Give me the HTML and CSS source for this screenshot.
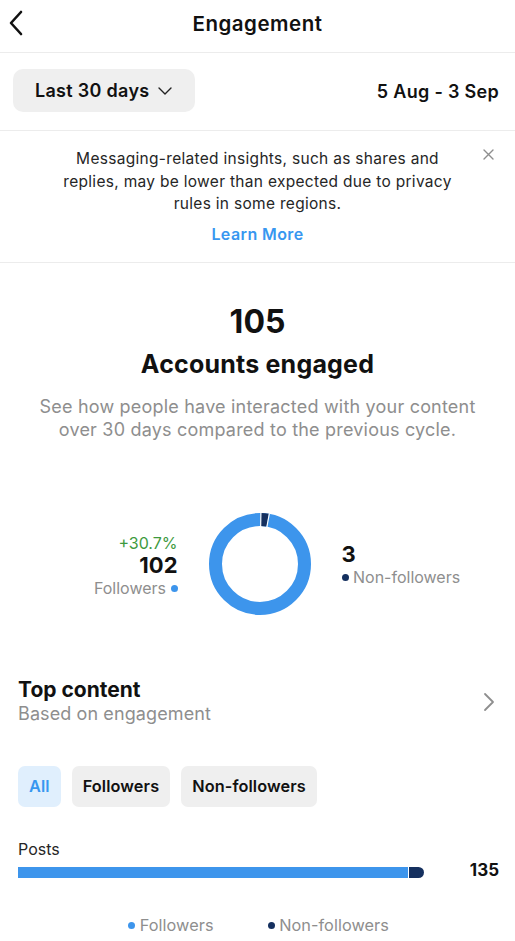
FILE: index.html
```html
<!DOCTYPE html>
<html lang="en">
<head>
    <meta charset="UTF-8">
    <meta name="viewport" content="width=device-width, initial-scale=1.0">
    <title>Engagement</title>
<link rel="stylesheet" href="styles.css">
</head>
<body>
    <header class="top-bar">
        <svg class="back" width="16" height="26" viewBox="0 0 16 26">
            <path d="M13 2 L3 13 L13 24" fill="none" stroke="#111" stroke-width="2.6" stroke-linecap="round" stroke-linejoin="round"/>
        </svg>
        <h1>Engagement</h1>
    </header>

    <div class="range-row">
        <button class="range-button">
            Last 30 days
            <svg width="14" height="8" viewBox="0 0 14 8">
                <path d="M1 1 L7 7 L13 1" fill="none" stroke="#222" stroke-width="1.4" stroke-linecap="round" stroke-linejoin="round"/>
            </svg>
        </button>
        <span class="range-dates">5 Aug - 3 Sep</span>
    </div>

    <section class="notice">
        <svg class="close" width="11" height="11" viewBox="0 0 11 11">
            <path d="M1 1 L10 10 M10 1 L1 10" stroke="#8e8e8e" stroke-width="1.4" stroke-linecap="round"/>
        </svg>
        <p>Messaging-related insights, such as shares and replies, may be lower than expected due to privacy rules in some regions.</p>
        <a href="#" class="learn-more">Learn More</a>
    </section>

    <section class="summary">
        <div class="total">105</div>
        <h2>Accounts engaged</h2>
        <p class="summary-text">See how people have interacted with your content over 30 days compared to the previous cycle.</p>
    </section>

    <section class="split">
        <div class="split-side left">
            <span class="change">+30.7%</span>
            <span class="count">102</span>
            <span class="label">Followers <i class="dot light"></i></span>
        </div>
        <svg class="donut" width="102" height="102" viewBox="0 0 102 102">
            <circle cx="51" cy="51" r="44.5" fill="none" stroke="#3d95ec" stroke-width="13"/>
            <circle cx="51" cy="51" r="44.5" fill="none" stroke="#15305f" stroke-width="13"
                    stroke-dasharray="7 300" transform="rotate(-89 51 51)"/>
            <line x1="51" y1="0" x2="51" y2="16" stroke="#fff" stroke-width="1.2" transform="rotate(1 51 51)"/>
            <line x1="51" y1="0" x2="51" y2="16" stroke="#fff" stroke-width="1.2" transform="rotate(10.5 51 51)"/>
        </svg>
        <div class="split-side right">
            <span class="count">3</span>
            <span class="label"><i class="dot dark"></i> Non-followers</span>
        </div>
    </section>

    <section class="top-content">
        <div>
            <h3>Top content</h3>
            <span class="sub">Based on engagement</span>
        </div>
        <svg width="12" height="20" viewBox="0 0 12 20">
            <path d="M2 2 L10 10 L2 18" fill="none" stroke="#8e8e8e" stroke-width="1.8" stroke-linecap="round" stroke-linejoin="round"/>
        </svg>
    </section>

    <div class="chips">
        <span class="chip active">All</span>
        <span class="chip">Followers</span>
        <span class="chip">Non-followers</span>
    </div>

    <section class="posts">
        <div class="posts-label">Posts</div>
        <div class="posts-row">
            <div class="bar">
                <div class="bar-followers" style="width: 390px"></div>
                <div class="bar-non"></div>
            </div>
            <span class="posts-total">135</span>
        </div>
    </section>

    <div class="legend">
        <span><i class="dot light"></i> Followers</span>
        <span><i class="dot dark"></i> Non-followers</span>
    </div>
</body>
</html>
```

FILE: styles.css
```css
body {
    margin: 0;
    font-family: Inter, "Noto Sans", sans-serif;
    color: #111;
    background: #fff;
    width: 515px;
}

.top-bar {
    height: 52px;
    border-bottom: 1px solid #ececec;
    display: flex;
    align-items: center;
    justify-content: center;
    position: relative;
}

.top-bar h1 {
    margin: 0 0 6px;
    font-size: 20.5px;
    font-weight: 600;
    letter-spacing: 0.5px;
}

.back {
    position: absolute;
    left: 8px;
    top: 10px;
}

.range-row {
    display: flex;
    align-items: center;
    justify-content: space-between;
    padding: 16px 16px 18px 13px;
    border-bottom: 1px solid #ececec;
}

.range-button {
    width: 182px;
    height: 43px;
    border: none;
    border-radius: 10px;
    background: #efefef;
    font-family: inherit;
    font-size: 18px;
    font-weight: 600;
    letter-spacing: 0.3px;
    color: #111;
    display: flex;
    align-items: center;
    gap: 8px;
    padding: 0 0 0 22px;
}

.range-dates {
    font-size: 18px;
    font-weight: 600;
    letter-spacing: 0.3px;
    margin-top: 2px;
}

.notice {
    position: relative;
    text-align: center;
    padding: 17px 0 18px;
    border-bottom: 1px solid #ececec;
}

.notice p {
    margin: 0 auto;
    width: 396px;
    font-size: 15.5px;
    letter-spacing: 0.3px;
    line-height: 22.5px;
    color: #262626;
}

.close {
    position: absolute;
    right: 21px;
    top: 18px;
}

.learn-more {
    display: inline-block;
    margin-top: 8px;
    color: #3897f0;
    font-size: 16px;
    line-height: 20px;
    font-weight: 600;
    letter-spacing: 0.4px;
    text-decoration: none;
}

.summary {
    text-align: center;
    padding-top: 40px;
}

.total {
    font-size: 32px;
    font-weight: 700;
    line-height: 38px;
}

.summary h2 {
    margin: 7px 0 0;
    font-size: 25px;
    font-weight: 700;
    letter-spacing: 0.2px;
    line-height: 32px;
}

.summary-text {
    margin: 15px auto 0;
    width: 450px;
    font-size: 18px;
    letter-spacing: 0.2px;
    line-height: 23px;
    color: #8e8e8e;
}

.split {
    display: flex;
    align-items: center;
    justify-content: center;
    gap: 31px;
    margin-top: 72px;
    padding-left: 4px;
}

.split-side {
    display: flex;
    flex-direction: column;
    width: 140px;
}

.split-side.left {
    align-items: flex-end;
    text-align: right;
    margin-top: 4px;
}

.split-side.right {
    align-items: flex-start;
    margin-top: 2px;
}

.change {
    color: #3e9a3e;
    font-size: 16px;
    line-height: 20px;
}

.count {
    font-size: 22px;
    font-weight: 700;
    line-height: 24px;
}

.label {
    color: #8e8e8e;
    font-size: 16px;
    line-height: 22px;
}

.dot {
    display: inline-block;
    width: 7px;
    height: 7px;
    border-radius: 50%;
    vertical-align: 2px;
}

.dot.light {
    background: #3d95ec;
}

.dot.dark {
    background: #15305f;
}

.top-content {
    display: flex;
    align-items: center;
    justify-content: space-between;
    padding: 0 20px 0 18px;
    margin-top: 63px;
}

.top-content h3 {
    margin: 0;
    font-size: 21px;
    font-weight: 700;
    line-height: 24px;
}

.sub {
    display: block;
    color: #8e8e8e;
    font-size: 18px;
    letter-spacing: 0.1px;
    line-height: 24px;
}

.chips {
    display: flex;
    gap: 11px;
    padding: 0 18px;
    margin-top: 40px;
}

.chip {
    height: 41px;
    display: flex;
    align-items: center;
    padding: 0 11px;
    border-radius: 7px;
    background: #efefef;
    font-size: 16.3px;
    letter-spacing: 0.1px;
    font-weight: 600;
}

.chip.active {
    background: #e0effd;
    color: #3897f0;
}

.posts {
    padding: 0 16px 0 18px;
    margin-top: 32px;
}

.posts-label {
    font-size: 16px;
    color: #262626;
    line-height: 20px;
}

.posts-row {
    display: flex;
    align-items: center;
    justify-content: space-between;
    margin-top: 1px;
}

.bar {
    display: flex;
    height: 11px;
    gap: 1px;
    margin-top: 2px;
}

.bar-followers {
    background: #3d95ec;
}

.bar-non {
    width: 15px;
    background: #15305f;
    border-radius: 0 6px 6px 0;
}

.posts-total {
    font-size: 17px;
    line-height: 21px;
    font-weight: 700;
    margin-bottom: 2px;
}

.legend {
    display: flex;
    justify-content: center;
    gap: 54px;
    margin-top: 32px;
    padding-left: 2px;
    color: #8e8e8e;
    font-size: 16.3px;
    letter-spacing: 0.05px;
}
```
